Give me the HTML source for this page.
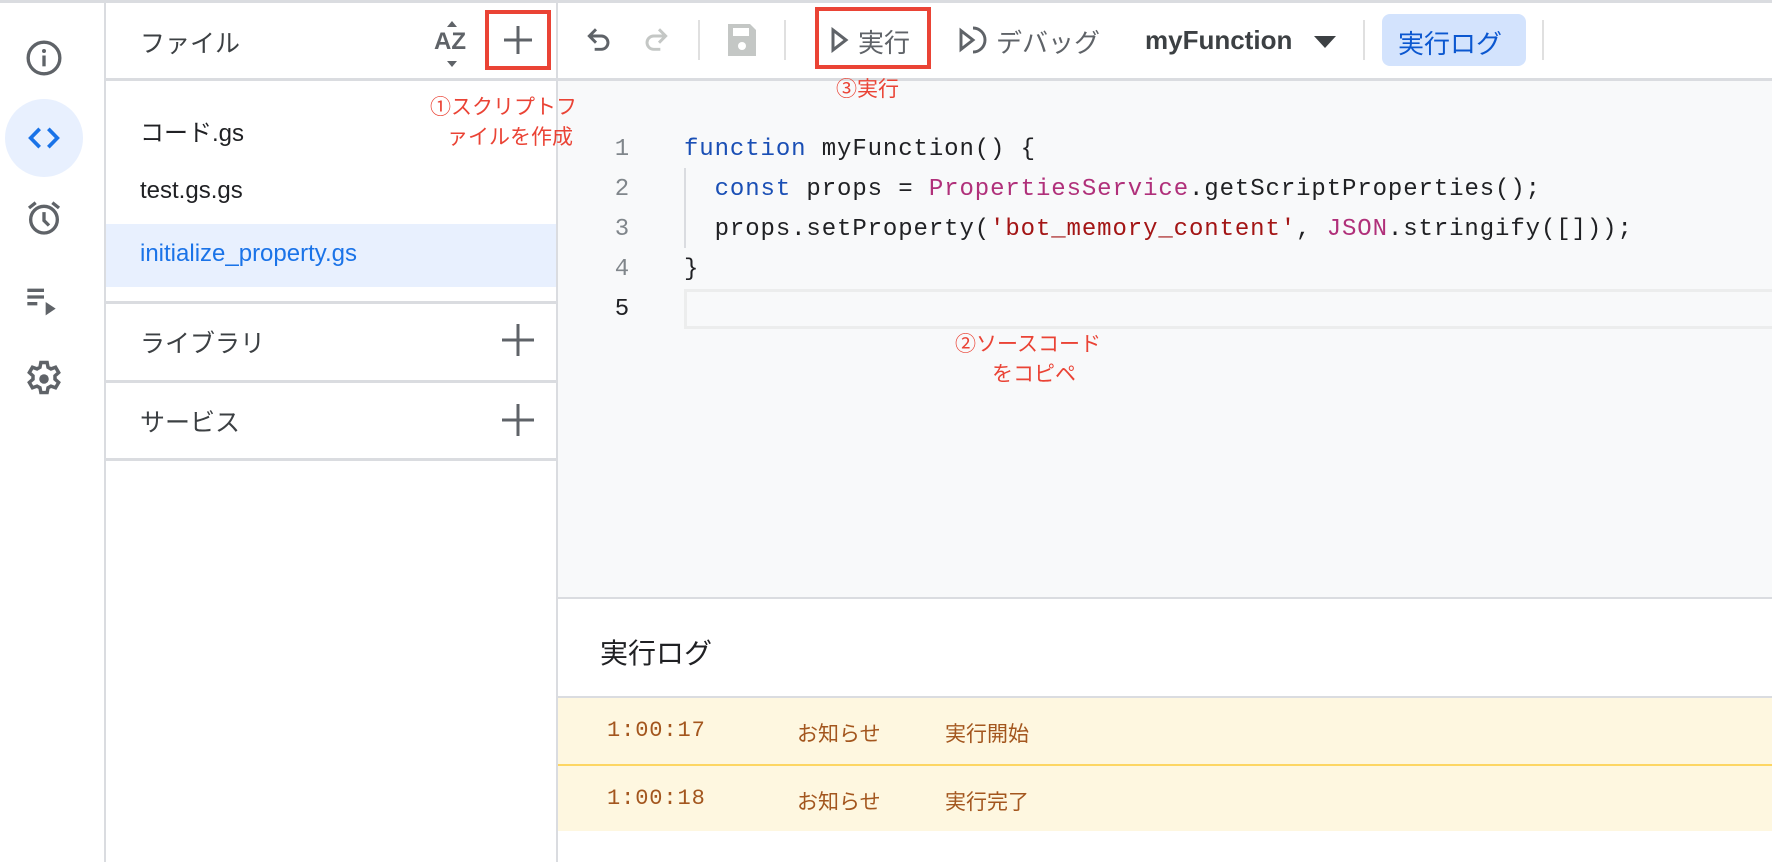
<!DOCTYPE html>
<html><head><meta charset="utf-8"><style>
*{margin:0;padding:0;box-sizing:border-box}
body{width:1772px;height:862px;overflow:hidden;background:#fff;position:relative;font-family:"Liberation Sans","Noto Sans CJK JP",sans-serif;color:#3c4043}
.a{position:absolute}
.t{position:absolute;white-space:nowrap}
.red{color:#ea4335;font-size:21px;line-height:30px;text-align:center;z-index:5}
.mono{font-family:"Liberation Mono","Noto Sans CJK JP",monospace;font-size:24px;letter-spacing:0.9px}
.code{position:absolute;left:684px;white-space:pre;color:#202124;line-height:40px}
.ln{position:absolute;left:600px;width:30px;text-align:right;color:#80868b;line-height:40px}
.kw{color:#1a4fb5}.cls{color:#b0307a}.str{color:#a31515}
.log{font-size:21px;color:#a3561e}
</style></head><body>
<div class="a" style="left:0;top:0;width:1772px;height:3px;background:#dadce0"></div>
<!-- rail -->
<div class="a" style="left:104px;top:3px;width:2px;height:859px;background:#dadce0"></div>
<div class="a" style="left:5px;top:99px;width:78px;height:78px;border-radius:50%;background:#e8f0fe"></div>
<svg class="a" style="left:24px;top:38px" width="40" height="40" viewBox="0 0 24 24"><circle cx="12" cy="12" r="9.5" fill="none" stroke="#5f6368" stroke-width="2"/><rect x="11" y="10.5" width="2" height="6.5" fill="#5f6368"/><circle cx="12" cy="7.8" r="1.2" fill="#5f6368"/></svg>
<svg class="a" style="left:24px;top:118px" width="40" height="40" viewBox="0 0 24 24"><path d="M9.4 6.5 4 12l5.4 5.5M14.6 6.5 20 12l-5.4 5.5" fill="none" stroke="#1a73e8" stroke-width="2.2"/></svg>
<svg class="a" style="left:24px;top:198px" width="40" height="40" viewBox="0 0 24 24"><circle cx="12" cy="13" r="8" fill="none" stroke="#5f6368" stroke-width="2"/><path d="M12 8.5v5l3 3" fill="none" stroke="#5f6368" stroke-width="2"/><path d="M3 6 7 2.8M21 6l-4-3.2" stroke="#5f6368" stroke-width="2"/></svg>
<svg class="a" style="left:24px;top:282px" width="40" height="40" viewBox="0 0 24 24"><path d="M2 5h10M2 9h10M2 13h6" stroke="#5f6368" stroke-width="2"/><path d="M13 12l6 4-6 4z" fill="#5f6368"/></svg>
<svg class="a" style="left:22px;top:357px" width="44" height="44" viewBox="0 0 24 24"><path fill="none" stroke="#5f6368" stroke-width="1.9" d="M10.3 3h3.4l.5 2.6 1.6.9 2.5-.9 1.7 2.9-2 1.8v1.8l2 1.8-1.7 2.9-2.5-.9-1.6.9-.5 2.6h-3.4l-.5-2.6-1.6-.9-2.5.9-1.7-2.9 2-1.8v-1.8l-2-1.8 1.7-2.9 2.5.9 1.6-.9z"/><circle cx="12" cy="12" r="2.6" fill="#5f6368"/></svg>
<!-- file panel -->
<div class="a" style="left:556px;top:3px;width:2px;height:859px;background:#dadce0"></div>
<div class="a" style="left:106px;top:78px;width:1666px;height:3px;background:#dadce0"></div>
<div class="t" style="left:140px;top:24px;font-size:25px">ファイル</div>
<div class="t" style="left:434px;top:28px;font-size:24px;font-weight:bold;color:#5f6368">AZ</div>
<svg class="a" style="left:444px;top:18px" width="16" height="52"><path d="M3 9 8 3l5 6zM3 43l5 6 5-6z" fill="#5f6368"/></svg>
<div class="a" style="left:485px;top:10px;width:66px;height:60px;border:4px solid #ea4335"></div>
<svg class="a" style="left:500px;top:22px" width="36" height="36"><path d="M18 4v28M4 18h28" stroke="#5f6368" stroke-width="3"/></svg>
<div class="t" style="left:140px;top:113px;font-size:24px;color:#202124">コード.gs</div>
<div class="t" style="left:140px;top:177px;font-size:24px;color:#202124">test.gs.gs</div>
<div class="a" style="left:106px;top:224px;width:450px;height:63px;background:#e8f0fe"></div>
<div class="t" style="left:140px;top:240px;font-size:24px;color:#1a73e8">initialize_property.gs</div>
<div class="a" style="left:106px;top:301px;width:450px;height:3px;background:#dadce0"></div>
<div class="t" style="left:140px;top:324px;font-size:25px">ライブラリ</div>
<svg class="a" style="left:500px;top:322px" width="36" height="36"><path d="M18 2v32M2 18h32" stroke="#5f6368" stroke-width="3"/></svg>
<div class="a" style="left:106px;top:380px;width:450px;height:3px;background:#dadce0"></div>
<div class="t" style="left:140px;top:403px;font-size:25px">サービス</div>
<svg class="a" style="left:500px;top:402px" width="36" height="36"><path d="M18 2v32M2 18h32" stroke="#5f6368" stroke-width="3"/></svg>
<div class="a" style="left:106px;top:458px;width:450px;height:3px;background:#dadce0"></div>
<!-- toolbar -->
<svg class="a" style="left:584px;top:24px" width="32" height="32" viewBox="0 0 24 24"><path d="M9 4 4 9l5 5M4 9h9a5 5 0 0 1 0 10H8" fill="none" stroke="#5f6368" stroke-width="2.2"/></svg>
<svg class="a" style="left:639px;top:24px" width="32" height="32" viewBox="0 0 24 24"><path d="M15 4l5 5-5 5M20 9h-9a5 5 0 0 0 0 10h5" fill="none" stroke="#c4c7c5" stroke-width="2.2"/></svg>
<div class="a" style="left:698px;top:20px;width:2px;height:40px;background:#e0e0e0"></div>
<svg class="a" style="left:726px;top:22px" width="32" height="36" viewBox="0 0 16 18"><path d="M1 1h11l3 3v13H1z" fill="#c4c7c5"/><rect x="3.5" y="3" width="8" height="4" fill="#fff"/><circle cx="8" cy="12" r="2" fill="#fff"/></svg>
<div class="a" style="left:784px;top:20px;width:2px;height:40px;background:#e0e0e0"></div>
<div class="a" style="left:815px;top:7px;width:116px;height:62px;border:4px solid #ea4335"></div>
<svg class="a" style="left:830px;top:27px" width="20" height="26"><path d="M3 3l13 10L3 23z" fill="none" stroke="#5f6368" stroke-width="3"/></svg>
<div class="t" style="left:858px;top:23px;font-size:26px;color:#5f6368">実行</div>
<svg class="a" style="left:956px;top:24px" width="34" height="32" viewBox="0 0 24 24"><path d="M3 5l9 7-9 7z" fill="none" stroke="#5f6368" stroke-width="2.2"/><path d="M12 3a9 9 0 1 1 0 18" fill="none" stroke="#5f6368" stroke-width="2.2"/></svg>
<div class="t" style="left:996px;top:23px;font-size:26px;color:#5f6368">デバッグ</div>
<div class="t" style="left:1145px;top:25px;font-size:26px;font-weight:bold;color:#3c4043">myFunction</div>
<svg class="a" style="left:1312px;top:34px" width="26" height="16"><path d="M2 2h22L13 14z" fill="#3c4043"/></svg>
<div class="a" style="left:1363px;top:20px;width:2px;height:40px;background:#e0e0e0"></div>
<div class="a" style="left:1382px;top:14px;width:144px;height:52px;border-radius:8px;background:#d3e3fd"></div>
<div class="t" style="left:1398px;top:24px;font-size:26px;color:#0b57d0">実行ログ</div>
<div class="a" style="left:1542px;top:20px;width:2px;height:40px;background:#e0e0e0"></div>
<!-- editor -->
<div class="a" style="left:558px;top:81px;width:1214px;height:516px;background:#f8f9fa"></div>
<div class="t red" style="left:430px;top:93px">①スクリプトフ</div>
<div class="t red" style="left:447px;top:123px">ァイルを作成</div>
<div class="t red" style="left:836px;top:75px">③実行</div>
<div class="a" style="left:684px;top:168px;width:2px;height:80px;background:#dadce0"></div>
<div class="a" style="left:684px;top:289px;width:1100px;height:40px;border:3px solid #eceded"></div>
<div class="mono">
<div class="ln" style="top:130px">1</div>
<div class="ln" style="top:170px">2</div>
<div class="ln" style="top:210px">3</div>
<div class="ln" style="top:250px">4</div>
<div class="ln" style="top:290px;color:#202124">5</div>
<div class="code" style="top:130px"><span class="kw">function</span> myFunction() {</div>
<div class="code" style="top:170px">  <span class="kw">const</span> props = <span class="cls">PropertiesService</span>.getScriptProperties();</div>
<div class="code" style="top:210px">  props.setProperty(<span class="str">'bot_memory_content'</span>, <span class="cls">JSON</span>.stringify([]));</div>
<div class="code" style="top:250px">}</div>
</div>
<div class="t red" style="left:955px;top:330px">②ソースコード</div>
<div class="t red" style="left:992px;top:360px">をコピペ</div>
<!-- log -->
<div class="a" style="left:558px;top:597px;width:1214px;height:2px;background:#dadce0"></div>
<div class="t" style="left:600px;top:632px;font-size:28px;color:#202124">実行ログ</div>
<div class="a" style="left:558px;top:696px;width:1214px;height:2px;background:#dadce0"></div>
<div class="a" style="left:558px;top:698px;width:1214px;height:133px;background:#fef7e0"></div>
<div class="a" style="left:558px;top:764px;width:1214px;height:2px;background:#fdd663"></div>
<div class="t log mono" style="left:607px;top:718px;font-size:22px;color:#a3561e">1:00:17</div>
<div class="t log" style="left:797px;top:718px">お知らせ</div>
<div class="t log" style="left:945px;top:718px">実行開始</div>
<div class="t log mono" style="left:607px;top:786px;font-size:22px;color:#a3561e">1:00:18</div>
<div class="t log" style="left:797px;top:786px">お知らせ</div>
<div class="t log" style="left:945px;top:786px">実行完了</div>
</body></html>
